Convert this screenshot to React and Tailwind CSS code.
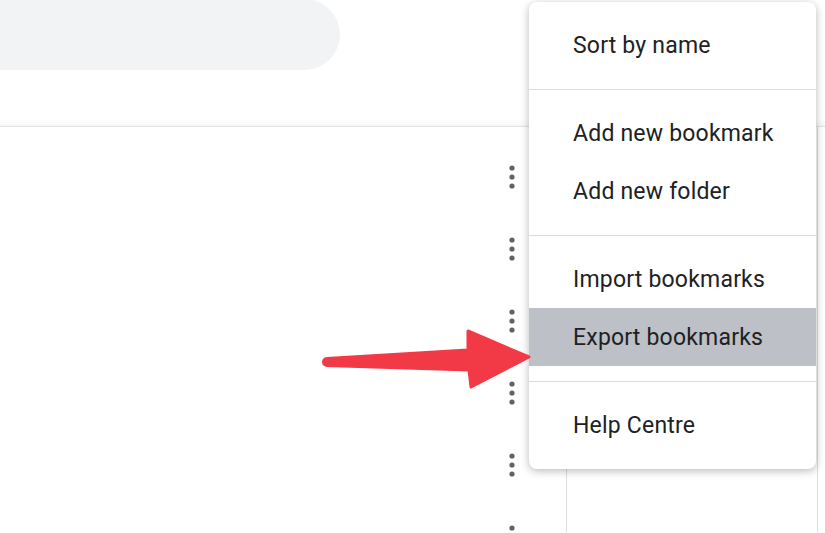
import React from 'react';

const rows = [0, 1, 2, 3, 4, 5];

const menuSections = [
  ['Sort by name'],
  ['Add new bookmark', 'Add new folder'],
  ['Import bookmarks', 'Export bookmarks'],
  ['Help Centre'],
];

const Kebab = () => (
  <svg width="6" height="24" viewBox="0 0 6 24" className="block">
    <circle cx="3" cy="3" r="2.6" fill="#5f6368" />
    <circle cx="3" cy="12" r="2.6" fill="#5f6368" />
    <circle cx="3" cy="21" r="2.6" fill="#5f6368" />
  </svg>
);

const App = () => {
  return (
    <div
      className="relative w-[825px] h-[533px] overflow-hidden bg-white"
      style={{ fontFamily: 'Roboto, "Liberation Sans", sans-serif' }}
    >
      {/* header with search */}
      <div className="h-[128px] border-b border-[#e4e4e4] shadow-[inset_0_-10px_10px_-10px_rgba(0,0,0,0.07)]">
        <div className="w-[340px] h-[71px] -mt-[1px] bg-[#f1f3f4] rounded-r-[36px]" />
      </div>

      {/* body */}
      <div className="flex h-[405px]">
        <div className="w-[567px] border-r border-[#dedede] pt-[14px]">
          {rows.map((r) => (
            <div key={r} className="h-[72px] flex items-center justify-end pr-[51px]">
              <Kebab />
            </div>
          ))}
        </div>
        <div className="w-[251px] border-r border-[#dedede]" />
      </div>

      {/* dropdown menu */}
      <div className="absolute top-[2px] left-[529px] w-[287px] bg-white rounded-[8px] shadow-[0_2px_9px_rgba(0,0,0,0.28)] overflow-hidden">
        {menuSections.map((items, i) => (
          <div
            key={i}
            className={`pt-[14px] pb-[15px] ${i > 0 ? 'border-t border-[#dadce0]' : ''}`}
          >
            {items.map((label) => (
              <div
                key={label}
                className={`h-[58px] flex items-center pl-[44px] pt-[2px] text-[23px] tracking-[0.2px] text-[#202124] ${
                  label === 'Export bookmarks' ? 'bg-[#bdc0c6]' : ''
                }`}
              >
                {label}
              </div>
            ))}
          </div>
        ))}
      </div>

      {/* annotation arrow */}
      <svg className="absolute inset-0 pointer-events-none" width="825" height="533">
        <path
          d="M 327 358.5 L 468 350 L 468 331 L 529 357 L 471 387 L 469 370 L 327 365.5 A 3.5 3.5 0 0 1 327 358.5 Z"
          fill="#f13a46"
          stroke="#f13a46"
          strokeWidth="3"
          strokeLinejoin="round"
        />
      </svg>
    </div>
  );
};

export default App;
